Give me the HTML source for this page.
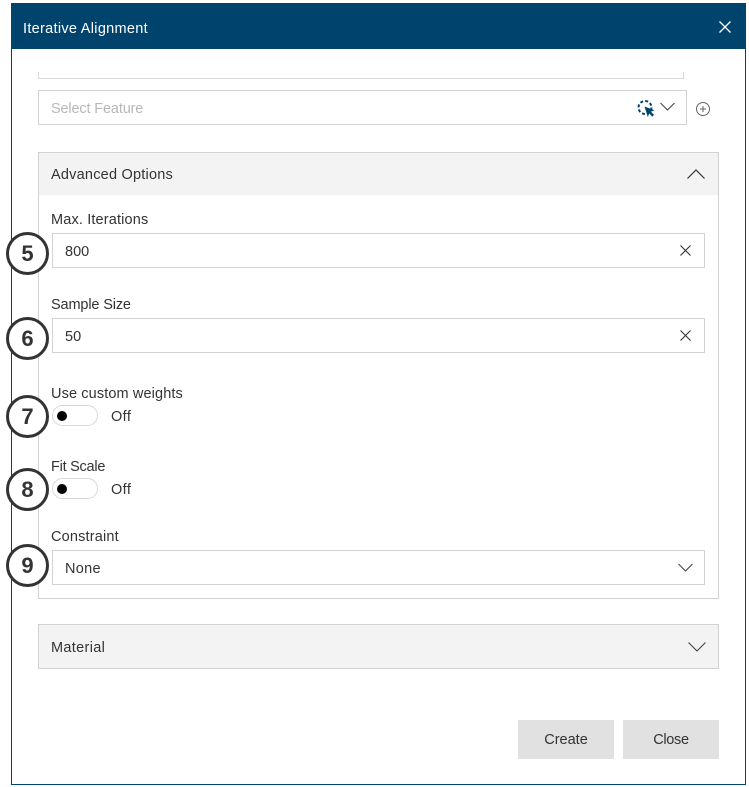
<!DOCTYPE html>
<html><head><meta charset="utf-8"><style>
html,body{margin:0;padding:0;background:#fff}
body{width:749px;height:787px;position:relative;overflow:hidden;font-family:"Liberation Sans",sans-serif;font-size:14.5px;color:#333}
.a{position:absolute;box-sizing:border-box}
.t{position:absolute;white-space:nowrap;line-height:18px}
.box{position:absolute;box-sizing:border-box;border:1px solid #d2d2d2;background:#fff}
.c{position:absolute;box-sizing:border-box;width:43px;height:43px;border:3px solid #333;border-radius:50%;background:#fff;left:6px;font-weight:bold;font-size:22px;line-height:38px;text-align:center;color:#333}
.sw{position:absolute;box-sizing:border-box;left:52px;width:46px;height:21px;border:1px solid #d8d8d8;border-radius:11px;background:#fff}
.sw i{position:absolute;left:4px;top:5px;width:10px;height:10px;border-radius:50%;background:#000}
svg{position:absolute;overflow:visible}
</style></head><body>
<div class="a" style="left:11px;top:3px;width:735px;height:782px;border:1px solid #00446e;border-top:0"></div>
<div class="a" style="left:11px;top:3px;width:735px;height:46px;background:#00446e"></div>
<div class="t" style="left:23px;top:20px;color:#fff;letter-spacing:.3px">Iterative Alignment</div>
<svg style="left:719px;top:21px" width="12" height="12" fill="none" stroke="#fff" stroke-width="1.3"><path d="M.5.5l11 11M11.500.5l-11 11"/></svg>

<div class="a" style="left:38px;top:72px;width:646px;height:7px;border:1px solid #d8d8d8;border-top:0"></div>
<div class="box" style="left:38px;top:90px;width:649px;height:35px"></div>
<div class="t" style="left:51px;top:100px;color:#b8b8b8;letter-spacing:-.15px">Select Feature</div>
<svg style="left:637px;top:100px" width="20" height="20" fill="none"><circle cx="8" cy="7.500" r="6.500" stroke="#00446e" stroke-width="2" stroke-dasharray="3 2.100"/><path d="M7.500 6.500l10 3.800-3.600 1.500 3.100 3.100-1.700 1.700-3.100-3.100-1.400 3.500z" fill="#00446e"/></svg>
<svg style="left:660px;top:102px" width="16" height="9" fill="none" stroke="#444" stroke-width="1.100"><path d="M.5 1l7 7 7-7"/></svg>
<svg style="left:696px;top:101px" width="15" height="15" fill="none" stroke="#666" stroke-width="1"><circle cx="7" cy="8" r="6.500"/><path d="M4 8h6M7 5v6"/></svg>

<div class="box" style="left:38px;top:152px;width:681px;height:447px"></div>
<div class="a" style="left:39px;top:153px;width:679px;height:42px;background:#f3f3f3"></div>
<div class="t" style="left:51px;top:166px;letter-spacing:.22px">Advanced Options</div>
<svg style="left:687px;top:169px" width="18" height="10" fill="none" stroke="#333" stroke-width="1.200"><path d="M.5 9.500l8.500-8.500 8.500 8.500"/></svg>

<div class="t" style="left:51px;top:211px;letter-spacing:.15px">Max. Iterations</div>
<div class="box" style="left:52px;top:233px;width:653px;height:35px"></div>
<div class="t" style="left:65px;top:243px">800</div>
<svg style="left:680px;top:245px" width="11" height="11" fill="none" stroke="#333" stroke-width="1.100"><path d="M.5.5l10 10M10.500.5l-10 10"/></svg>
<div class="c" style="top:232px">5</div>

<div class="t" style="left:51px;top:296px;letter-spacing:-.14px">Sample Size</div>
<div class="box" style="left:52px;top:318px;width:653px;height:35px"></div>
<div class="t" style="left:65px;top:328px">50</div>
<svg style="left:680px;top:330px" width="11" height="11" fill="none" stroke="#333" stroke-width="1.100"><path d="M.5.5l10 10M10.500.5l-10 10"/></svg>
<div class="c" style="top:317px">6</div>

<div class="t" style="left:51px;top:385px;letter-spacing:.12px">Use custom weights</div>
<div class="c" style="top:395px">7</div>
<div class="sw" style="top:405px"><i></i></div>
<div class="t" style="left:111px;top:408px;letter-spacing:.4px">Off</div>

<div class="t" style="left:51px;top:458px;letter-spacing:-.25px">Fit Scale</div>
<div class="c" style="top:468px">8</div>
<div class="sw" style="top:478px"><i></i></div>
<div class="t" style="left:111px;top:481px;letter-spacing:.4px">Off</div>

<div class="t" style="left:51px;top:528px;letter-spacing:.17px">Constraint</div>
<div class="box" style="left:52px;top:550px;width:653px;height:35px"></div>
<div class="t" style="left:65px;top:560px;letter-spacing:.3px">None</div>
<svg style="left:678px;top:563px" width="16" height="9" fill="none" stroke="#444" stroke-width="1.100"><path d="M.5 1l7 7 7-7"/></svg>
<div class="c" style="top:544px">9</div>

<div class="box" style="left:38px;top:624px;width:681px;height:45px;background:#f3f3f3"></div>
<div class="t" style="left:51px;top:639px;letter-spacing:.33px">Material</div>
<svg style="left:688px;top:642px" width="18" height="10" fill="none" stroke="#444" stroke-width="1.100"><path d="M.5.5l8.500 8.500 8.500-8.500"/></svg>

<div class="a" style="left:518px;top:720px;width:96px;height:39px;background:#e1e1e1;text-align:center;line-height:40px">Create</div>
<div class="a" style="left:623px;top:720px;width:96px;height:39px;background:#e1e1e1;text-align:center;line-height:40px;letter-spacing:-.3px">Close</div>
</body></html>
